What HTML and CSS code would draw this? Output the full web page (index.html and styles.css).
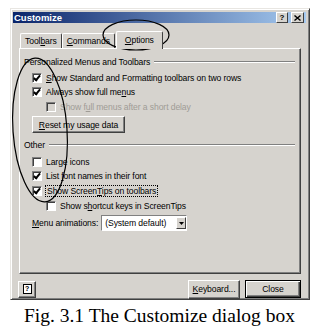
FILE: index.html
```html
<!DOCTYPE html>
<html>
<head>
<meta charset="utf-8">
<link rel="stylesheet" href="styles.css">
</head>
<body>
<div class="stage">
  <div class="dialog">
    <div class="titlebar">
      <span class="title">Customize</span>
      <div class="tb-btns">
        <span class="tbbtn help">?</span>
        <span class="tbbtn close">
          <svg width="7" height="6" viewBox="0 0 7 6"><path d="M0.5 0.5 L6.5 5.5 M6.5 0.5 L0.5 5.5" stroke="#000" stroke-width="1.4"/></svg>
        </span>
      </div>
    </div>
    <div class="tabs">
      <div class="tab first">Tool<u>b</u>ars</div>
      <div class="tab"><u>C</u>ommands</div>
      <div class="tab active"><u>O</u>ptions</div>
    </div>
    <div class="panel">
      <div class="group"><span>Personalized Menus and Toolbars</span><i class="rule"></i></div>
      <div class="cb m3"><span class="box on"></span><span><u>S</u>how Standard and Formatting toolbars on two rows</span></div>
      <div class="cb m0"><span class="box on"></span><span>Always show full me<u>n</u>us</span></div>
      <div class="cb sub dis"><span class="box"></span><span>Show f<u>u</u>ll menus after a short delay</span></div>
      <div class="btnrow"><span class="btn reset"><u>R</u>eset my usage data</span></div>
      <div class="group other"><span>Other</span><i class="rule"></i></div>
      <div class="cb m4"><span class="box"></span><span>Lar<u>g</u>e icons</span></div>
      <div class="cb m0"><span class="box on"></span><span>List <u>f</u>ont names in their font</span></div>
      <div class="cb"><span class="box on"></span><span class="focus">Show Screen<u>T</u>ips on toolbars</span></div>
      <div class="cb sub"><span class="box"></span><span>Show s<u>h</u>ortcut keys in ScreenTips</span></div>
      <div class="anim"><span><u>M</u>enu animations:</span>
        <span class="select"><span class="val">(System default)</span><span class="arrow"><svg width="5" height="3" viewBox="0 0 5 3"><path d="M0 0 H5 L2.5 3 Z" fill="#000"/></svg></span></span>
      </div>
    </div>
    <div class="footer">
      <span class="btn qbtn"><span class="qicon">?</span></span>
      <span class="spacer"></span>
      <span class="btn kbd"><u>K</u>eyboard...</span>
      <span class="btn closebtn">Close</span>
    </div>
  </div>
  <div class="caption">Fig. 3.1 The Customize dialog box</div>
  <svg class="marks" width="319" height="329" viewBox="0 0 319 329">
    <ellipse cx="136" cy="35" rx="33" ry="15" fill="none" stroke="#000" stroke-width="1.2"/>
    <ellipse cx="40" cy="130" rx="27" ry="72" fill="none" stroke="#000" stroke-width="1.2" transform="rotate(-4 40 130)"/>
  </svg>
</div>
</body>
</html>
```
FILE: styles.css
```css
html, body {
  margin: 0;
  padding: 0;
  background: #fff;
}
.stage {
  position: relative;
  width: 319px;
  height: 329px;
  overflow: hidden;
}
.dialog {
  margin: 8px 0 0 10px;
  width: 293px;
  height: 287px;
  background: #d6d3ce;
  border: 1px solid;
  border-color: #e8e6e2 #404040 #404040 #e8e6e2;
  box-shadow: inset 1px 1px 0 #fff, inset -1px -1px 0 #808080;
  padding: 3px 3px 0 2px;
  display: flex;
  flex-direction: column;
  font-family: "Liberation Sans", Arial, sans-serif;
  font-size: 8.6px;
  letter-spacing: -0.1px;
  color: #000;
}
u { text-decoration: underline; text-underline-offset: 1px; }
.titlebar {
  height: 11px;
  background: linear-gradient(to right, #0a246a, #a6caf0);
  display: flex;
  align-items: center;
  padding: 0 2px 0 1px;
}
.title {
  color: #fff;
  font-weight: bold;
  font-size: 9.5px;
  letter-spacing: 0;
  flex: 1;
}
.tb-btns { display: flex; gap: 3px; }
.tbbtn {
  width: 10px;
  height: 9px;
  background: #d6d3ce;
  border: 1px solid;
  border-color: #fff #404040 #404040 #fff;
  display: flex;
  align-items: center;
  justify-content: center;
  font-weight: bold;
  font-size: 8px;
  line-height: 1;
}
.tbbtn.close { width: 11px; }
.tabs {
  display: flex;
  align-items: flex-end;
  height: 25px;
  padding-left: 7px;
}
.tab {
  height: 14px;
  line-height: 14px;
  padding: 0 4px;
  border: 1px solid;
  border-color: #fff #404040 transparent #fff;
  border-bottom: none;
  border-radius: 2px 2px 0 0;
}
.tab.active {
  height: 17px;
  line-height: 16px;
  padding: 0 8px;
  margin-left: 1px;
  background: #d6d3ce;
  position: relative;
  z-index: 1;
  margin-bottom: -1px;
}
.panel {
  margin: 0 5px 0 6px;
  height: 217px;
  border: 1px solid;
  border-color: #fff #404040 #404040 #fff;
  box-shadow: inset -1px -1px 0 #808080;
  display: flex;
  flex-direction: column;
  padding: 7px 0 0 4px;
}
.group {
  display: flex;
  align-items: center;
  gap: 4px;
  height: 12px;
  padding-right: 5px;
}
.group .rule {
  flex: 1;
  height: 0;
  border-top: 1px solid #808080;
  border-bottom: 1px solid #fff;
}
.group.other { margin-top: 6px; }
.cb {
  display: flex;
  align-items: center;
  height: 14px;
  gap: 4px;
  padding-left: 8px;
  margin-top: 1px;
}
.cb.m3 { margin-top: 3px; }
.cb.m0 { margin-top: 0; }
.cb.m4 { margin-top: 4px; }
.cb.sub { padding-left: 22px; }
.cb.dis { color: #a09c96; }
.box {
  width: 8px;
  height: 8px;
  background: #fff;
  border: 1px solid;
  border-color: #808080 #fff #fff #808080;
  box-shadow: inset 1px 1px 0 #404040;
  position: relative;
  flex: none;
}
.cb.dis .box { background: #d6d3ce; }
.box.on::after {
  content: "";
  position: absolute;
  left: 2px;
  top: 0px;
  width: 2px;
  height: 5px;
  border: solid #000;
  border-width: 0 2px 2px 0;
  transform: rotate(40deg);
}
.focus { outline: 1px dotted #000; outline-offset: 0; padding: 0 1px; }
.btnrow { padding-left: 8px; margin-top: 2px; display: flex; }
.btn {
  display: flex;
  align-items: center;
  justify-content: center;
  background: #d6d3ce;
  border: 1px solid;
  border-color: #fff #404040 #404040 #fff;
  box-shadow: inset -1px -1px 0 #808080;
}
.reset { width: 91px; height: 15px; }
.anim {
  display: flex;
  align-items: center;
  gap: 3px;
  padding-left: 8px;
  margin-top: 2px;
  height: 16px;
}
.select {
  width: 84px;
  height: 14px;
  background: #fff;
  border: 1px solid;
  border-color: #808080 #fff #fff #808080;
  display: flex;
  align-items: center;
}
.select .val { flex: 1; padding-left: 3px; }
.select .arrow {
  width: 10px;
  height: 12px;
  background: #d6d3ce;
  border: 1px solid;
  border-color: #fff #404040 #404040 #fff;
  box-sizing: border-box;
  display: flex;
  align-items: center;
  justify-content: center;
}
.footer {
  display: flex;
  align-items: center;
  gap: 5px;
  padding: 5px 5px 0 5px;
  height: 20px;
}
.spacer { flex: 1; }
.qbtn { width: 16px; height: 15px; }
.qicon {
  width: 7px;
  height: 8px;
  border: 1px solid #000;
  font-size: 7px;
  font-weight: bold;
  line-height: 8px;
  text-align: center;
  background: #fff;
}
.kbd { width: 50px; height: 17px; }
.closebtn {
  width: 54px;
  height: 16px;
  border: 1px solid #000;
  box-shadow: inset 1px 1px 0 #fff, inset -1px -1px 0 #404040, inset -2px -2px 0 #808080;
}
.caption {
  text-align: center;
  font-family: "Liberation Serif", "Times New Roman", serif;
  font-size: 19.5px;
  margin-top: 5px;
  color: #000;
}
.marks {
  position: absolute;
  left: 0;
  top: 0;
  pointer-events: none;
}
```
